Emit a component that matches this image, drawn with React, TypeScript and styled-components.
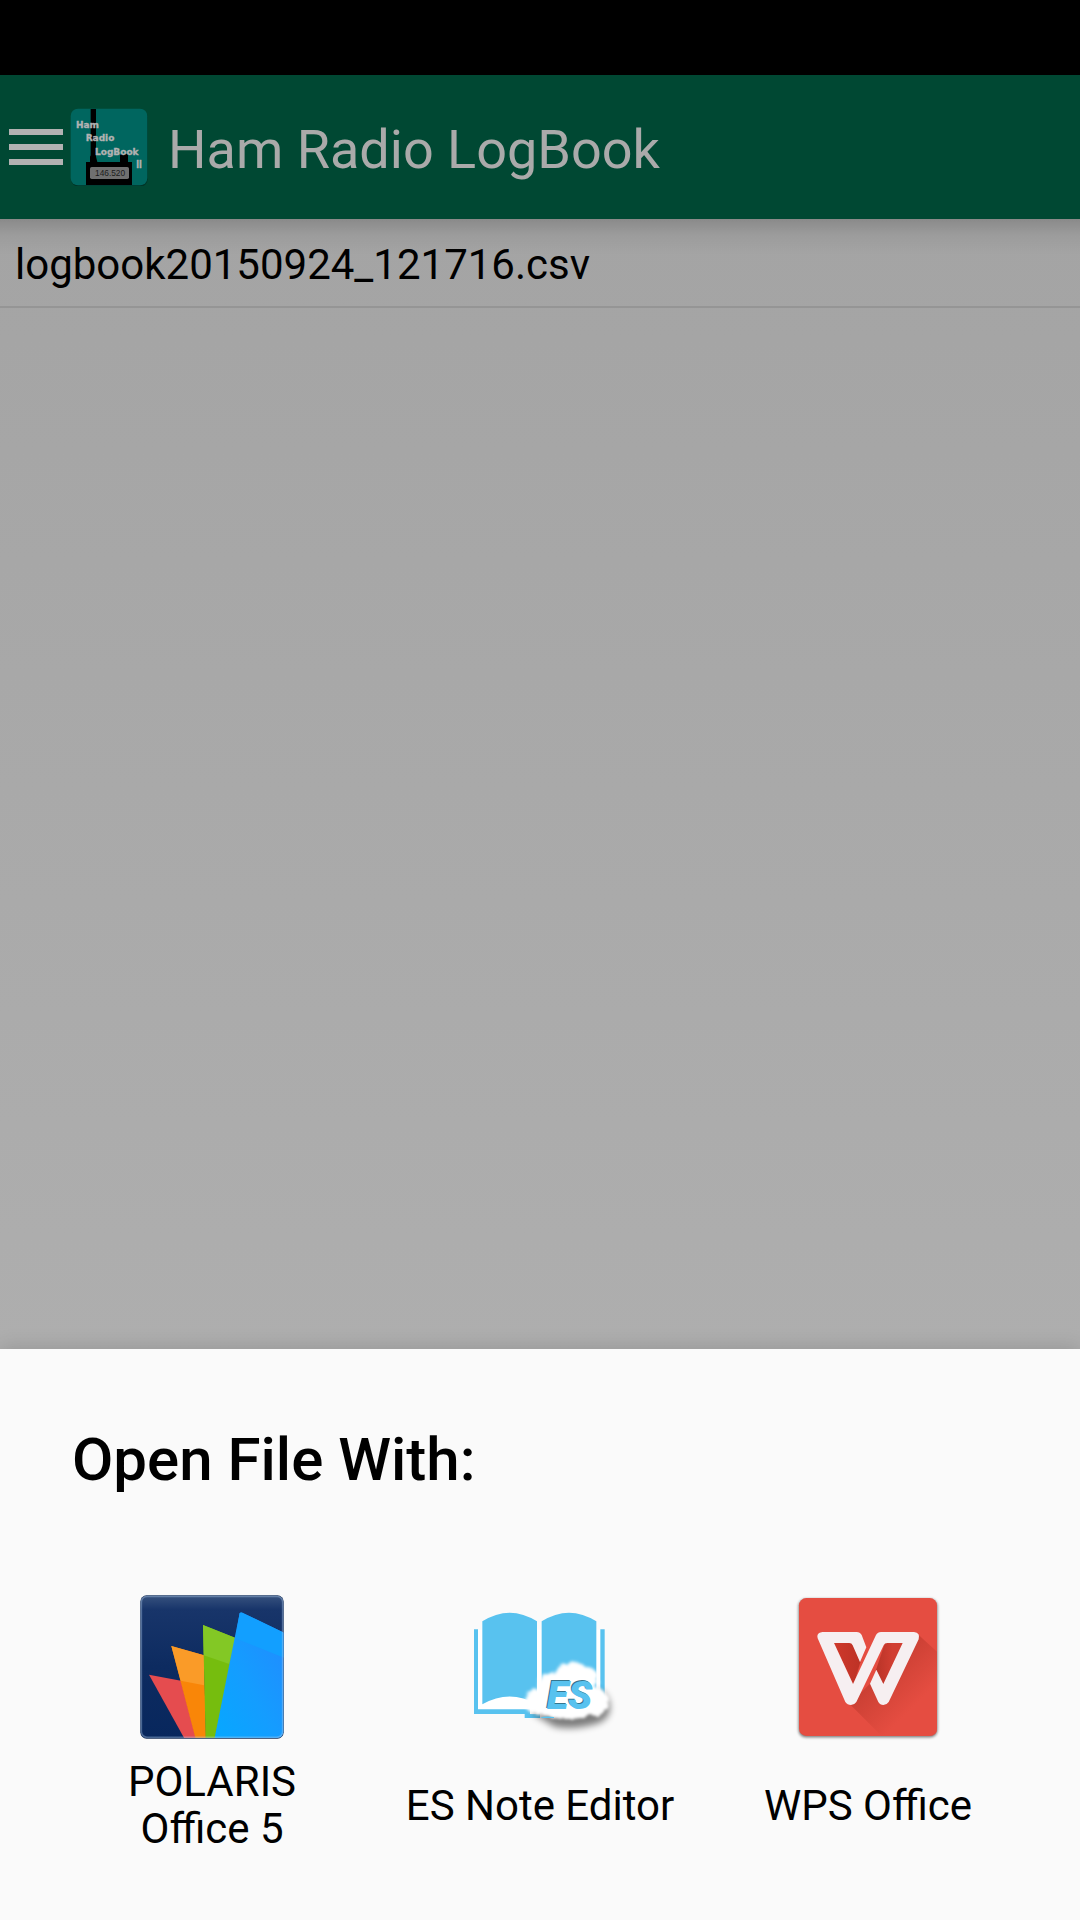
import React from "react";
import styled, { createGlobalStyle } from "styled-components";

const GlobalStyle = createGlobalStyle`
  *, *::before, *::after { box-sizing: border-box; }
  body {
    margin: 0;
    font-family: Roboto, "Noto Sans", sans-serif;
    color: #000;
  }
  button { font: inherit; color: inherit; }
`;

const Screen = styled.div`
  display: flex;
  flex-direction: column;
  min-height: 100vh;
  background: linear-gradient(#a2a2a2, #aeaeae 1350px);
`;

const StatusBar = styled.div`
  height: 75px;
  background: #000;
`;

const Toolbar = styled.header`
  display: flex;
  align-items: center;
  height: 144px;
  background: #004833;
  color: #aaa;
`;

const MenuButton = styled.button`
  display: flex;
  flex-direction: column;
  gap: 9px;
  width: 70px;
  padding: 0 7px 0 9px;
  border: 0;
  background: none;
  cursor: pointer;
`;

const MenuLine = styled.span`
  height: 6px;
  background: #b2b2b2;
`;

const AppLogo = styled.svg`
  flex: none;
  width: 78px;
  height: 78px;
`;

const Title = styled.h1`
  margin: 0;
  padding: 6px 0 0 20px;
  font-size: 54px;
  line-height: 64px;
  font-weight: 400;
`;

const Files = styled.main`
  flex: 1;
  background: linear-gradient(
    rgba(0, 0, 0, 0.16),
    rgba(0, 0, 0, 0.05) 16px,
    rgba(0, 0, 0, 0) 36px
  );
`;

const FileList = styled.ul`
  margin: 0;
  padding: 0;
  list-style: none;
`;

const FileRow = styled.li`
  border-bottom: 2px solid #959595;
`;

const FileButton = styled.button`
  display: block;
  width: 100%;
  padding: 18px 15px 13px;
  border: 0;
  background: none;
  font-size: 42px;
  line-height: 56px;
  text-align: left;
  cursor: pointer;
`;

const Sheet = styled.section`
  padding: 72px 48px 68px;
  background: #fafafa;
  box-shadow: 0 0 20px rgba(0, 0, 0, 0.16);
`;

const SheetTitle = styled.h2`
  margin: 0 0 96px;
  padding: 0 24px;
  font-size: 60px;
  line-height: 78px;
  font-weight: 500;
`;

const AppGrid = styled.div`
  display: grid;
  grid-template-columns: repeat(3, 1fr);
`;

const AppButton = styled.button`
  display: flex;
  flex-direction: column;
  align-items: center;
  gap: 19px;
  padding: 0 28px;
  border: 0;
  background: none;
  cursor: pointer;
`;

const AppIcon = styled.svg`
  width: 144px;
  height: 144px;
  overflow: visible;
`;

const AppLabel = styled.span`
  display: flex;
  align-items: center;
  min-height: 94px;
  font-size: 42px;
  line-height: 47px;
  text-align: center;
`;

function RadioLogo() {
  return (
    <AppLogo viewBox="30 24 234 234" aria-hidden="true">
      <rect x="33" y="30" width="230" height="230" rx="22" fill="#003527" />
      <rect x="32" y="26" width="230" height="230" rx="22" fill="#00665f" />
      <path
        d="M92 27h16v143l4 16h68v-20l4-4h18l2 4v20h12v69H78v-69h12v-16l2-4z"
        fill="#000"
      />
      <rect x="90" y="201" width="117" height="36" rx="5" fill="#707070" />
      <g
        fill="#b2b2b2"
        stroke="#b2b2b2"
        strokeWidth="1"
        fontFamily='"DejaVu Sans", sans-serif'
        fontWeight="700"
        fontSize="27"
      >
        <text x="48" y="83">Ham</text>
        <text x="77" y="123">Radio</text>
        <text x="105" y="164">LogBook</text>
        <text x="229" y="204" fontFamily='"Liberation Sans", sans-serif' fontSize="30">II</text>
      </g>
      <text
        x="105"
        y="228"
        fill="#1c1c1c"
        fontFamily='"Liberation Sans", sans-serif'
        fontSize="25"
      >
        146.520
      </text>
    </AppLogo>
  );
}

function PolarisIcon() {
  return (
    <AppIcon viewBox="30 30 432 432" aria-hidden="true">
      <defs>
        <linearGradient id="navy" x1="0" y1="0" x2="0" y2="1">
          <stop offset="0" stopColor="#38537f" />
          <stop offset="0.1" stopColor="#18356a" />
          <stop offset="0.5" stopColor="#0d2b60" />
          <stop offset="1" stopColor="#08275d" />
        </linearGradient>
        <linearGradient id="sky" x1="0" y1="1" x2="1" y2="0">
          <stop offset="0" stopColor="#06a8ff" />
          <stop offset="0.45" stopColor="#149dff" />
          <stop offset="1" stopColor="#2389ff" />
        </linearGradient>
        <clipPath id="polarisTile">
          <rect x="32" y="32" width="428" height="427" rx="18" />
        </clipPath>
      </defs>
      <rect x="31" y="31" width="430" height="430" rx="19" fill="#0a2048" />
      <g clipPath="url(#polarisTile)">
        <rect x="30" y="30" width="432" height="432" fill="url(#navy)" />
        <path d="M57 269l96 18 46 175h-35z" fill="#e54c4f" />
        <path d="M124 183l98 28 6 251h-31z" fill="#f98608" />
        <path d="M124 183l98 28v90l-70-14z" fill="#fa9b28" />
        <path d="M219 120l98 39-62 303h-28z" fill="#76bd0e" />
        <path d="M219 120l98 39-19 78-77-26z" fill="#83c825" />
        <path d="M329 84q3-3 8-1l125 60v320H253z" fill="url(#sky)" />
        <path d="M329 84q3-3 8-1l125 60v75l-146-58z" fill="#129fff" />
      </g>
      <rect
        x="34"
        y="34"
        width="424"
        height="423"
        rx="17"
        fill="none"
        stroke="#adc8e8"
        strokeOpacity="0.4"
        strokeWidth="5"
      />
    </AppIcon>
  );
}

function NoteEditorIcon() {
  return (
    <AppIcon viewBox="24 0 432 432" aria-hidden="true">
      <defs>
        <filter id="cloudShadow" x="-20%" y="-20%" width="150%" height="160%">
          <feGaussianBlur stdDeviation="11" />
        </filter>
        <filter id="cloudEdge" x="-10%" y="-10%" width="120%" height="120%">
          <feTurbulence type="fractalNoise" baseFrequency="0.07" numOctaves="3" result="noise" />
          <feDisplacementMap in="SourceGraphic" in2="noise" scale="20" />
          <feGaussianBlur stdDeviation="4" />
        </filter>
      </defs>
      <path d="M54 104h370v240H54z" fill="#fff" />
      <path
        d="M42 103h12v240h156v14H240v12h-46v-12H42zM421 103h13v200h-13z"
        fill="#58c2ef"
      />
      <path d="M67 79q82-52 164 0v249q-82-47-164 0z" fill="#58c2ef" />
      <path d="M245 79q82-52 164 0v249H245z" fill="#58c2ef" />
      <path
        d="M222 358q-8-42 42-45l160-25q26 18 26 55-4 30-36 42-70 22-130 10z"
        fill="#000"
        opacity="0.5"
        filter="url(#cloudShadow)"
      />
      <g fill="#fff" filter="url(#cloudEdge)">
        <circle cx="232" cy="320" r="38" />
        <circle cx="272" cy="270" r="38" />
        <circle cx="338" cy="259" r="58" />
        <circle cx="380" cy="250" r="34" />
        <circle cx="404" cy="320" r="42" />
        <ellipse cx="322" cy="320" rx="110" ry="52" />
      </g>
      <path d="M240 369q12-7 42-3v3z" fill="#58c2ef" />
      <g
        fontFamily="Roboto, sans-serif"
        fontWeight="900"
        fontStyle="italic"
        fontSize="118"
      >
        <text x="258" y="338" fill="#36768f">ES</text>
        <text x="261" y="341" fill="#58c2ef">ES</text>
      </g>
    </AppIcon>
  );
}

function WpsIcon() {
  return (
    <AppIcon viewBox="33 30 432 432" aria-hidden="true">
      <defs>
        <filter id="tileShadow" x="-10%" y="-10%" width="120%" height="120%">
          <feGaussianBlur stdDeviation="4" />
        </filter>
        <linearGradient
          id="longShadow"
          gradientUnits="userSpaceOnUse"
          x1="280"
          y1="270"
          x2="380"
          y2="370"
        >
          <stop offset="0" stopColor="#c03a2e" />
          <stop offset="1" stopColor="#e54d41" />
        </linearGradient>
        <linearGradient id="foldLeft" x1="0" y1="0" x2="1" y2="0">
          <stop offset="0" stopColor="#ce382b" />
          <stop offset="1" stopColor="#bd3226" />
        </linearGradient>
        <linearGradient id="foldRight" x1="0" y1="0" x2="1" y2="0">
          <stop offset="0" stopColor="#b93428" />
          <stop offset="0.6" stopColor="#d13e32" />
        </linearGradient>
      </defs>
      <rect x="41" y="42" width="416" height="415" rx="22" opacity="0.55" filter="url(#tileShadow)" />
      <rect x="42" y="39" width="414" height="414" rx="22" fill="#e54d41" />
      <path
        d="M401 150l55 50v232q0 21-22 21H290l-96-96z"
        fill="url(#longShadow)"
        opacity="0.7"
      />
      <path d="M147 173h55l24 59-20 68z" fill="url(#foldLeft)" />
      <path d="M300 173h55l-60 126-22-44z" fill="url(#foldRight)" />
      <path
        d="M112 141h103q10 0 15 9l14 37-19 44-22-50q-3-7-10-7h-46l57 123 69-147q5-9 15-9h99q20 3 14 22l-90 188q-6 9-16 9-10 0-15-9l-25-55 19-42 21 43 58-123h-46q-8 0-11 7l-82 170q-6 9-16 9-11 0-17-9L98 160q-5-16 14-19z"
        fill="#f6eff1"
      />
    </AppIcon>
  );
}

const files = ["logbook20150924_121716.csv"];

const apps = [
  { name: "POLARIS Office 5", Icon: PolarisIcon },
  { name: "ES Note Editor", Icon: NoteEditorIcon },
  { name: "WPS Office", Icon: WpsIcon },
];

export default function App() {
  return (
    <>
      <GlobalStyle />
      <Screen>
        <StatusBar />
        <Toolbar>
          <MenuButton type="button" aria-label="Open menu">
            <MenuLine />
            <MenuLine />
            <MenuLine />
          </MenuButton>
          <RadioLogo />
          <Title>Ham Radio LogBook</Title>
        </Toolbar>
        <Files>
          <FileList>
            {files.map((file) => (
              <FileRow key={file}>
                <FileButton type="button">{file}</FileButton>
              </FileRow>
            ))}
          </FileList>
        </Files>
        <Sheet aria-labelledby="sheet-title">
          <SheetTitle id="sheet-title">Open File With:</SheetTitle>
          <AppGrid>
            {apps.map(({ name, Icon }) => (
              <AppButton key={name} type="button">
                <Icon />
                <AppLabel>{name}</AppLabel>
              </AppButton>
            ))}
          </AppGrid>
        </Sheet>
      </Screen>
    </>
  );
}
